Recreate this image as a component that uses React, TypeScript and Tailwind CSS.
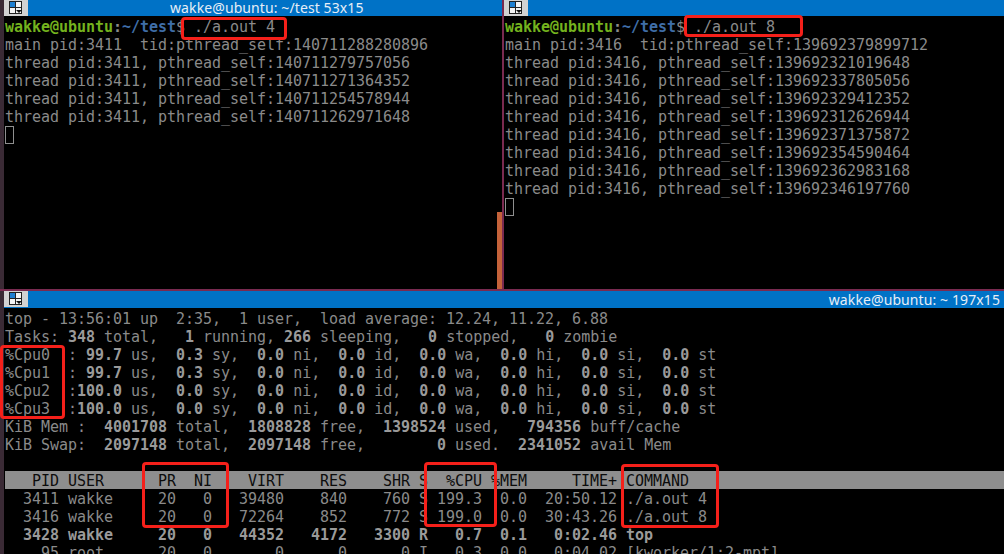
import React from "react";

const B = ({ children }: { children: React.ReactNode }) => <span className="font-bold text-[#9a9a9a]">{children}</span>;

const Icon = () => (
  <div className="flex h-[16px] w-[24px] items-start bg-[#d2d2d2] pl-[5px] pt-[1px]">
    <svg width="14" height="13" viewBox="0 0 14 13">
      <rect x="0.5" y="0.5" width="6" height="6" fill="#1f7fd0" stroke="#222" />
      <rect x="6.5" y="0.5" width="6" height="6" fill="#f4f4f4" stroke="#222" />
      <rect x="0.5" y="6.5" width="6" height="6" fill="#f4f4f4" stroke="#222" />
      <rect x="6.5" y="6.5" width="6" height="6" fill="#f4f4f4" stroke="#222" />
      <path d="M7 9h6l-3 3z" fill="#111" />
    </svg>
  </div>
);

const Box = ({ c }: { c: string }) => <div className={`absolute rounded-[4px] border-[3px] border-[#f5201a] ${c}`} />;

const leftLines = [
  "main pid:3411  tid:pthread_self:140711288280896",
  "thread pid:3411, pthread_self:140711279757056",
  "thread pid:3411, pthread_self:140711271364352",
  "thread pid:3411, pthread_self:140711254578944",
  "thread pid:3411, pthread_self:140711262971648",
];
const rightLines = [
  "main pid:3416  tid:pthread_self:139692379899712",
  "thread pid:3416, pthread_self:139692321019648",
  "thread pid:3416, pthread_self:139692337805056",
  "thread pid:3416, pthread_self:139692329412352",
  "thread pid:3416, pthread_self:139692312626944",
  "thread pid:3416, pthread_self:139692371375872",
  "thread pid:3416, pthread_self:139692354590464",
  "thread pid:3416, pthread_self:139692362983168",
  "thread pid:3416, pthread_self:139692346197760",
];

const Prompt = ({ cmd }: { cmd: string }) => (
  <div className="h-[18px]">
    <span className="font-bold text-[#74b31e]">wakke@ubuntu</span>
    <span className="font-bold text-[#8a8a8a]">:</span>
    <span className="font-bold text-[#3f6ea8]">~/test</span>
    <span className="text-[#8a8a8a]">$ {cmd}</span>
  </div>
);

const Cursor = () => <div className="h-[18px] w-[9px] border border-[#8f8f8f]" />;

const cpu = (name: string, a: string, b: string) => (
  <div className="h-[18px]" key={name}>
    {name} :<B>{a}</B> us, <B> {b}</B> sy, <B> 0.0</B> ni, <B> 0.0</B> id, <B> 0.0</B> wa, <B> 0.0</B> hi, <B> 0.0</B> si, <B> 0.0</B> st
  </div>
);

export default function App() {
  return (
    <div
      className="flex h-[554px] w-[1004px] flex-col overflow-hidden whitespace-pre bg-black text-[15px] leading-[18px] tracking-[-0.03px] text-[#8a8a8a]"
      style={{ fontFamily: '"DejaVu Sans Mono", monospace' }}
    >
      <div className="flex h-[289px] shrink-0 pl-[4px] [background:linear-gradient(90deg,#3a2a35_4px,#000_4px)]">
        <div className="relative flex w-[498px] flex-col">
          <div className="relative flex h-[16px] shrink-0 bg-[#0072c6]">
            <Icon />
            <div
              className="absolute left-[166px] top-0 text-[14px] leading-[16px] tracking-[0.1px] text-[#e6eef6]"
              style={{ fontFamily: '"Noto Sans", sans-serif' }}
            >
              wakke@ubuntu: ~/test 53x15
            </div>
          </div>
          <div className="pl-[1px] pt-[2px]">
            <Prompt cmd="./a.out 4" />
            {leftLines.map((l) => (
              <div key={l} className="h-[18px]">{l}</div>
            ))}
            <Cursor />
          </div>
          <Box c="left-[177px] top-[17px] h-[23px] w-[106px]" />
          <div className="absolute right-0 top-[212px] h-[77px] w-[5px] bg-[#c4623a]" />
        </div>
        <div className="w-[2px] shrink-0 bg-[#7a2a50]" />
        <div className="relative flex flex-1 flex-col">
          <div className="flex h-[16px] shrink-0 bg-[#0072c6]"><Icon /></div>
          <div className="pl-[1px] pt-[2px]">
            <Prompt cmd="./a.out 8" />
            {rightLines.map((l) => (
              <div key={l} className="h-[18px]">{l}</div>
            ))}
            <Cursor />
          </div>
          <Box c="left-[180px] top-[15px] h-[22px] w-[119px]" />
        </div>
      </div>
      <div className="h-[2px] shrink-0 bg-[#7a2a50]" />
      <div className="relative flex flex-1 flex-col pl-[4px] [background:linear-gradient(90deg,#3a2a35_4px,#000_4px)]">
        <div className="relative flex h-[17px] shrink-0 items-start justify-between bg-[#0072c6]">
          <Icon />
          <div
            className="pr-[4px] text-[14px] leading-[17px] tracking-[0.1px] text-[#e6eef6]"
            style={{ fontFamily: '"Noto Sans", sans-serif' }}
          >
            wakke@ubuntu: ~ 197x15
          </div>
        </div>
        <div className="pl-[1px] pt-[2px]">
          <div className="h-[18px]">top - 13:56:01 up  2:35,  1 user,  load average: 12.24, 11.22, 6.88</div>
          <div className="h-[18px]">Tasks:<B> 348</B> total,<B>   1</B> running,<B> 266</B> sleeping,<B>   0</B> stopped,<B>   0</B> zombie</div>
          {cpu("%Cpu0 ", " 99.7", "0.3")}
          {cpu("%Cpu1 ", " 99.7", "0.3")}
          {cpu("%Cpu2 ", "100.0", "0.0")}
          {cpu("%Cpu3 ", "100.0", "0.0")}
          <div className="h-[18px]">KiB Mem :<B>  4001708</B> total,<B>  1808828</B> free,<B>  1398524</B> used,<B>   794356</B> buff/cache</div>
          <div className="h-[18px]">KiB Swap:<B>  2097148</B> total,<B>  2097148</B> free,<B>        0</B> used.<B>  2341052</B> avail Mem</div>
          <div className="h-[18px]" />
          <div className="-mt-[1px] mb-[1px] h-[18px] bg-[#8e8e8e] pt-[1px] text-[#0c0c0c]">   PID USER      PR  NI    VIRT    RES    SHR S  %CPU %MEM     TIME+ COMMAND</div>
          <div className="h-[18px]">  3411 wakke     20   0   39480    840    760 S 199.3  0.0  20:50.12 ./a.out 4</div>
          <div className="h-[18px]">  3416 wakke     20   0   72264    852    772 S 199.0  0.0  30:43.26 ./a.out 8</div>
          <div className="h-[18px] font-bold text-[#9a9a9a]">  3428 wakke     20   0   44352   4172   3300 R   0.7  0.1   0:02.46 top</div>
          <div className="h-[18px]">    95 root      20   0       0      0      0 I   0.3  0.0   0:04.02 [kworker/1:2-mpt]</div>
        </div>
        <Box c="left-0 top-[54px] h-[74px] w-[65px]" />
        <Box c="left-[142px] top-[171px] h-[66px] w-[87px]" />
        <Box c="left-[424px] top-[171px] h-[65px] w-[73px]" />
        <Box c="left-[621px] top-[173px] h-[64px] w-[98px]" />
      </div>
    </div>
  );
}
